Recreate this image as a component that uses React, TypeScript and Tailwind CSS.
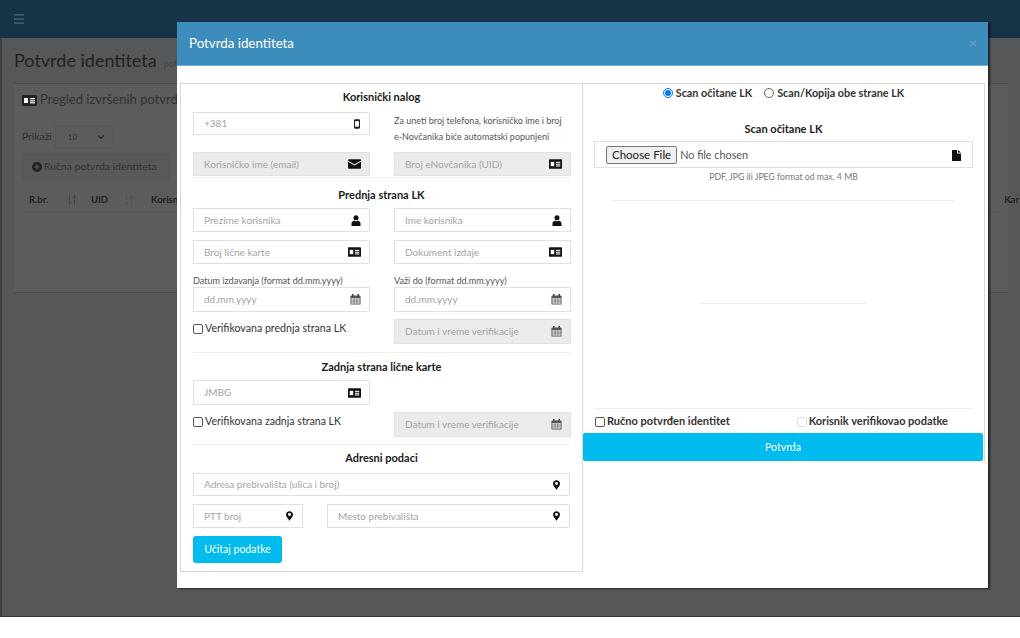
import { ArrowDownUp, ChevronDown, Menu } from 'lucide-react';
import { ReactNode } from 'react';

const font = { fontFamily: 'Lato, "Open Sans", sans-serif' };

function IdCardIcon({ className = 'h-[10px] w-[13px] text-[#111]' }: { className?: string }) {
    return (
        <svg viewBox="0 0 15 11" className={className}>
            <rect width="15" height="11" rx="1" fill="currentColor" />
            <rect x="2" y="3" width="4" height="5" fill="#fff" />
            <rect x="8" y="3" width="5" height="1.2" fill="#fff" />
            <rect x="8" y="5.2" width="5" height="1.2" fill="#fff" />
            <rect x="8" y="7.2" width="5" height="1.2" fill="#fff" />
        </svg>
    );
}

function UserIcon() {
    return (
        <svg viewBox="0 0 10 11" className="h-[11px] w-[10px] text-[#111]">
            <circle cx="5" cy="2.8" r="2.5" fill="currentColor" />
            <path d="M0.5 11V8.4C0.5 7 2 6 3.4 5.6L5 6.6L6.6 5.6C8 6 9.5 7 9.5 8.4V11Z" fill="currentColor" />
        </svg>
    );
}

function MailIcon() {
    return (
        <svg viewBox="0 0 14 10" className="h-[10px] w-[13px]">
            <rect width="14" height="10" rx="1" fill="#111" />
            <path d="M0 2L7 6L14 2" stroke="#ebebeb" strokeWidth="1.2" fill="none" />
        </svg>
    );
}

function PhoneIcon() {
    return (
        <svg viewBox="0 0 7 11" className="mr-[1px] h-[10px] w-[6px]">
            <rect x="0.6" y="0.6" width="5.8" height="9.8" rx="1" fill="none" stroke="#222" strokeWidth="1.2" />
            <rect x="0.6" y="0.6" width="5.8" height="1.6" fill="#222" />
            <rect x="0.6" y="8.6" width="5.8" height="1.8" fill="#222" />
        </svg>
    );
}

function Pin() {
    return (
        <svg viewBox="0 0 8 11" className="mr-[1px] h-[10px] w-[7px]">
            <path d="M4 0C1.8 0 0 1.7 0 3.9C0 6.4 2.6 9 4 11C5.4 9 8 6.4 8 3.9C8 1.7 6.2 0 4 0Z" fill="#111" />
            <circle cx="4" cy="3.9" r="1.7" fill="#fff" />
        </svg>
    );
}

function Calendar() {
    return (
        <svg viewBox="0 0 12 12" className="h-[11px] w-[11px]">
            <rect x="2.2" y="0" width="1.6" height="3" fill="#333" />
            <rect x="8.2" y="0" width="1.6" height="3" fill="#333" />
            <rect x="0.5" y="1.5" width="11" height="10" rx="1" fill="#555" />
            <rect x="1.5" y="4.5" width="9" height="6" fill="#e8e8e8" />
            <path d="M1.5 6.5H10.5M1.5 8.5H10.5M4.5 4.5V10.5M7.5 4.5V10.5" stroke="#666" strokeWidth="0.7" />
        </svg>
    );
}

function FileIcon() {
    return (
        <svg viewBox="0 0 9 11" className="h-[11px] w-[9px]">
            <path d="M0 0H5V3.5H9V11H0Z" fill="#111" />
            <path d="M6 0L9 2.6H6Z" fill="#111" />
        </svg>
    );
}

function PlusDisc() {
    return (
        <svg viewBox="0 0 10 10" className="h-[10px] w-[10px]">
            <circle cx="5" cy="5" r="5" fill="#222" />
            <path d="M5 2.5V7.5M2.5 5H7.5" stroke="#58595a" strokeWidth="1.5" />
        </svg>
    );
}

function Field({ text, icon, disabled = false, className = 'h-[24px]' }: { text: string; icon: ReactNode; disabled?: boolean; className?: string }) {
    return (
        <div
            className={`flex items-center justify-between border border-[#dfe1e4] pr-[8px] pl-[10px] text-[10px] text-[#a2a4a7] ${disabled ? 'bg-[#ebebeb]' : 'bg-white'} ${className}`}
        >
            <span>{text}</span>
            {icon}
        </div>
    );
}

function Heading({ children, className = '' }: { children: ReactNode; className?: string }) {
    return <p className={`text-center text-[11px] leading-[14px] font-bold text-[#1a1a1a] ${className}`}>{children}</p>;
}

function Check({ label, bold = false, faded = false }: { label: string; bold?: boolean; faded?: boolean }) {
    return (
        <div className={`flex items-center text-[#333] ${bold ? 'text-[11px] font-bold' : 'text-[10.6px]'}`}>
            <span className={`mr-[2px] h-[10px] w-[10px] rounded-[2px] border bg-white ${faded ? 'border-[#ddd]' : 'border-[#555]'}`} />
            {label}
        </div>
    );
}

function Divider({ className = '' }: { className?: string }) {
    return <div className={`h-px bg-[#eceeef] ${className}`} />;
}

function LeftPanel() {
    return (
        <div className="w-[403px] shrink-0 self-start border border-[#d8d8d8] px-[12px] pt-[6px] pb-[8px]">
            <Heading>Korisnički nalog</Heading>
            <div className="mt-[8px] grid grid-cols-[177px_177px] gap-x-[24px]">
                <Field text="+381" className="h-[23px]" icon={<PhoneIcon />} />
                <p className="h-[23px] pt-[1px] text-[9px] leading-[16px] whitespace-nowrap text-[#555]">
                    Za uneti broj telefona, korisničko ime i broj
                    <br />
                    e-Novčanika biće automatski popunjeni
                </p>
            </div>
            <div className="mt-[17px] grid grid-cols-[177px_177px] gap-x-[24px]">
                <Field text="Korisničko ime (email)" disabled icon={<MailIcon />} />
                <Field text="Broj eNovčanika (UID)" disabled icon={<IdCardIcon />} />
            </div>
            <Divider className="mt-[1px]" />
            <Heading className="mt-[10px]">Prednja strana LK</Heading>
            <div className="mt-[6px] grid grid-cols-[177px_177px] gap-x-[24px] gap-y-[8px]">
                <Field text="Prezime korisnika" icon={<UserIcon />} />
                <Field text="Ime korisnika" icon={<UserIcon />} />
                <Field text="Broj lične karte" icon={<IdCardIcon />} />
                <Field text="Dokument izdaje" icon={<IdCardIcon />} />
            </div>
            <div className="mt-[11px] grid grid-cols-[177px_177px] gap-x-[24px]">
                <p className="text-[9.1px] leading-[12px] whitespace-nowrap text-[#555]">Datum izdavanja (format dd.mm.yyyy)</p>
                <p className="text-[9.1px] leading-[12px] whitespace-nowrap text-[#555]">Važi do (format dd.mm.yyyy)</p>
            </div>
            <div className="grid grid-cols-[177px_177px] gap-x-[24px] gap-y-[7px]">
                <Field text="dd.mm.yyyy" className="h-[25px]" icon={<Calendar />} />
                <Field text="dd.mm.yyyy" className="h-[25px]" icon={<Calendar />} />
                <div className="pt-[2px]">
                    <Check label="Verifikovana prednja strana LK" />
                </div>
                <Field text="Datum i vreme verifikacije" className="h-[25px]" disabled icon={<Calendar />} />
            </div>
            <Divider className="mt-[8px]" />
            <Heading className="mt-[7px]">Zadnja strana lične karte</Heading>
            <div className="mt-[6px] grid grid-cols-[177px_177px] gap-x-[24px] gap-y-[7px]">
                <Field text="JMBG" className="h-[25px]" icon={<IdCardIcon />} />
                <div />
                <div className="pt-[2px]">
                    <Check label="Verifikovana zadnja strana LK" />
                </div>
                <Field text="Datum i vreme verifikacije" className="h-[25px]" disabled icon={<Calendar />} />
            </div>
            <Divider className="mt-[7px]" />
            <Heading className="mt-[6px]">Adresni podaci</Heading>
            <Field text="Adresa prebivališta (ulica i broj)" icon={<Pin />} className="mt-[8px] h-[23px]" />
            <div className="mt-[8px] flex gap-x-[24px]">
                <Field text="PTT broj" icon={<Pin />} className="h-[24px] w-[110px]" />
                <Field text="Mesto prebivališta" icon={<Pin />} className="h-[24px] w-[243px]" />
            </div>
            <button className="mt-[8px] block h-[27px] w-[89px] rounded-[3px] bg-[#00bcee] text-[10.5px] text-white">Učitaj podatke</button>
        </div>
    );
}

function RightPanel() {
    return (
        <div className="flex-1 self-start border-t border-r border-[#d8d8d8]">
            <div className="flex h-[18px] items-center justify-center text-[10.8px] font-bold text-[#333]">
                <span className="mr-[3px] flex h-[10px] w-[10px] items-center justify-center rounded-full border border-[#0075ff] bg-white">
                    <span className="h-[6px] w-[6px] rounded-full bg-[#0075ff]" />
                </span>
                Scan očitane LK
                <span className="mr-[3px] ml-[12px] h-[10px] w-[10px] rounded-full border border-[#666] bg-white" />
                Scan/Kopija obe strane LK
            </div>
            <Heading className="mt-[20px]">Scan očitane LK</Heading>
            <div className="mx-[11px] mt-[5px] flex h-[27px] items-center border border-[#dfe1e4] pt-[1px] pr-[11px] pl-[10px] text-[10.8px] text-[#555]">
                <span className="mr-[3px] ml-[1px] rounded-[2px] border border-[#777] bg-[#efefef] px-[5px] text-[11.5px] leading-[16px] text-[#222]">Choose File</span>
                <span>No file chosen</span>
                <span className="ml-auto flex">
                    <FileIcon />
                </span>
            </div>
            <p className="mt-[3px] text-center text-[8.7px] leading-[12px] text-[#777]">PDF, JPG ili JPEG format od max. 4 MB</p>
            <Divider className="mx-[29px] mt-[17px]" />
            <Divider className="mx-[117px] mt-[102px]" />
            <Divider className="mx-[11px] mt-[104px]" />
            <div className="flex h-[24px] items-center justify-between pt-[1px] pr-[36px] pl-[12px]">
                <Check label="Ručno potvrđen identitet" bold />
                <Check label="Korisnik verifikovao podatke" bold faded />
            </div>
            <button className="block h-[28px] w-[400px] rounded-[2px] bg-[#00bcee] pt-[1px] text-[10.5px] text-white">Potvrda</button>
        </div>
    );
}

function Modal() {
    return (
        <div className="absolute top-[22px] left-[177px] h-[566px] w-[811px] bg-white shadow-[2px_1px_2px_rgba(0,0,0,0.6)]">
            <div className="flex h-[44px] items-center justify-between border-b border-[#6fb0d6] bg-[#3c8dbc] pt-[1px] pr-[11px] pl-[12px]">
                <span className="text-[13.3px] text-white">Potvrda identiteta</span>
                <span className="-mt-[3px] text-[14px] leading-none text-[#6ea4c6]">×</span>
            </div>
            <div className="mt-[17px] flex px-[3px]">
                <LeftPanel />
                <RightPanel />
            </div>
        </div>
    );
}

export default function App() {
    return (
        <div className="relative h-[638px] w-[1020px] overflow-hidden bg-white" style={font}>
            <div className="flex h-[38px] items-center bg-[#173347] pl-[12px]">
                <Menu size={14} strokeWidth={1.5} className="text-[#6f8291]" />
            </div>
            <div className="h-[579px] border-b border-[#333] border-l-2 border-l-[#3f3f40] bg-[#565759] px-[12px] pt-[10px]">
                <div className="flex items-baseline gap-x-[7px] border-b border-[#4c4d4f] pb-[11px]">
                    <h1 className="text-[18px] leading-[24px] text-[#222]">Potvrde identiteta</h1>
                    <span className="text-[9px] text-[#444]">pot</span>
                </div>
                <div className="h-[209px] border-b border-[#4c4d4f] bg-[#5c5c5d] px-[8px] pt-[8px]">
                    <div className="flex h-[16px] items-center gap-x-[3px] text-[13px] text-[#333]">
                        <IdCardIcon className="h-[11px] w-[15px] text-[#222]" />
                        Pregled izvršenih potvrda
                    </div>
                    <div className="mt-[17px] flex items-center gap-x-[3px] text-[10.3px] text-[#2f2f2f]">
                        Prikaži
                        <span className="flex h-[23px] w-[59px] items-center justify-between border border-[#565759] pr-[7px] pl-[12px] text-[8px]">
                            10
                            <ChevronDown size={10} strokeWidth={3} className="text-[#2a2a2a]" />
                        </span>
                    </div>
                    <div className="mt-[5px] flex h-[27px] w-[148px] items-center gap-x-[2px] bg-[#58595a] pl-[10px] text-[10.4px] text-[#333]">
                        <PlusDisc />
                        Ručna potvrda identiteta
                    </div>
                    <div className="relative mt-[8px] flex h-[25px] items-center justify-between border-b border-[#565759] text-[9.5px] font-bold text-[#222]">
                        <div className="flex items-center pl-[7px]">
                            <span className="w-[37px]">R.br.</span>
                            <ArrowDownUp size={12} strokeWidth={2} className="mr-[13px] text-[#444]" />
                            <span className="w-[32px]">UID</span>
                            <ArrowDownUp size={12} strokeWidth={2} className="mr-[16px] text-[#505050]" />
                            <span>Korisnik</span>
                        </div>
                        <span className="-mr-[19px]">Kar</span>
                    </div>
                </div>
            </div>
            <Modal />
        </div>
    );
}
